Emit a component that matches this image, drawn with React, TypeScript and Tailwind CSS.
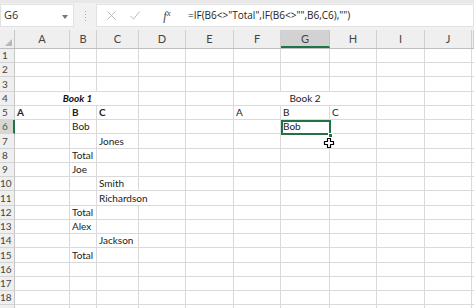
const cols = ["A", "B", "C", "D", "E", "F", "G", "H", "I", "J", ""];
const widths = [55, 27, 42, 47, 48, 47, 49, 47, 48, 47, 2];

type Cell = { text: string; bold?: boolean; noRight?: boolean };

const data: Record<number, Record<number, Cell>> = {
  5: {
    0: { text: "A", bold: true },
    1: { text: "B", bold: true },
    2: { text: "C", bold: true },
    5: { text: "A" },
    6: { text: "B" },
    7: { text: "C" },
  },
  6: { 1: { text: "Bob" }, 6: { text: "Bob" } },
  7: { 2: { text: "Jones" } },
  8: { 1: { text: "Total" } },
  9: { 1: { text: "Joe" } },
  10: { 2: { text: "Smith" } },
  11: { 2: { text: "Richardson", noRight: true } },
  12: { 1: { text: "Total" } },
  13: { 1: { text: "Alex" } },
  14: { 2: { text: "Jackson" } },
  15: { 1: { text: "Total" } },
};

function RowHeader({ n }: { n: number }) {
  const active = n === 6;
  return (
    <div
      className={`flex h-full w-[15px] shrink-0 items-end overflow-visible whitespace-nowrap text-[10px] leading-[13px] ${
        n < 10 ? "pl-[2px]" : "pl-0"
      } ${
        active
          ? "border-r-2 border-r-[#217346] bg-[#d6d6d6] text-[#217346]"
          : "border-r border-r-[#c6c6c6] bg-[#efefef] text-[#444]"
      } border-b border-b-[#d4d4d4]`}
    >
      {n}
    </div>
  );
}

function Row({ n }: { n: number }) {
  if (n === 4) {
    return (
      <div className="flex h-[14.25px]">
        <RowHeader n={n} />
        <div className="flex w-[124px] shrink-0 items-end justify-center border-b border-r border-[#dadada] pl-[2px] text-[10px] font-bold italic leading-[13px] text-[#111]">
          Book 1
        </div>
        <div className="w-[47px] shrink-0 border-b border-r border-[#dadada]" />
        <div className="w-[48px] shrink-0 border-b border-r border-[#dadada]" />
        <div className="flex w-[143px] shrink-0 items-end justify-center border-b border-r border-[#dadada] text-[10px] leading-[13px] text-[#222]">
          Book 2
        </div>
        <div className="w-[48px] shrink-0 border-b border-r border-[#dadada]" />
        <div className="w-[47px] shrink-0 border-b border-r border-[#dadada]" />
        <div className="w-[2px] shrink-0 border-b border-[#dadada]" />
      </div>
    );
  }
  const row = data[n] || {};
  return (
    <div className="flex h-[14.25px]">
      <RowHeader n={n} />
      {widths.map((w, i) => {
        const c = row[i];
        return (
          <div
            key={i}
            style={{ width: w }}
            className={`relative flex shrink-0 items-end whitespace-nowrap border-b border-[#dadada] pl-[2px] text-[10px] leading-[13px] text-[#222] ${
              c?.noRight ? "" : "border-r"
            } ${c?.bold ? "font-bold text-[#111]" : ""}`}
          >
            {c ? <span className="relative z-10">{c.text}</span> : null}
          </div>
        );
      })}
    </div>
  );
}

function FillCursor() {
  return (
    <svg width="12" height="12" viewBox="0 0 12 12" className="absolute left-[323px] top-[137px] z-20">
      <path
        d="M4.5 1.5h3v3h3v3h-3v3h-3v-3h-3v-3h3z"
        fill="white"
        stroke="black"
        strokeWidth="1.2"
        strokeLinejoin="round"
      />
    </svg>
  );
}

export default function App() {
  const rows = Array.from({ length: 19 }, (_, i) => i + 1);
  return (
    <div className="relative h-[308px] w-[474px] overflow-hidden bg-white font-['Lato','Liberation_Sans',sans-serif]">
      <div className="h-[3px] bg-[#e8e8e8]" />
      <div className="flex h-[24px] items-stretch bg-[#f1f1f1] pt-[1px]">
        <div className="flex w-[74px] items-center justify-between border border-[#e2e2e2] bg-white pl-[3px] pr-[5px] font-['Open_Sans',sans-serif] text-[11px] text-[#333]">
          <span>G6</span>
          <svg width="6" height="4" viewBox="0 0 6 4" className="mt-[2px]">
            <path d="M0 0h6L3 4z" fill="#777" />
          </svg>
        </div>
        <div className="flex w-[22px] items-center justify-center">
          <svg width="3" height="10" viewBox="0 0 3 10">
            <rect x="1" y="0" width="1" height="1" fill="#aaa" />
            <rect x="1" y="3" width="1" height="1" fill="#aaa" />
            <rect x="1" y="6" width="1" height="1" fill="#aaa" />
            <rect x="1" y="9" width="1" height="1" fill="#aaa" />
          </svg>
        </div>
        <div className="flex flex-1 items-center border border-[#e2e2e2] bg-white">
          <div className="flex w-[25px] justify-center pl-[3px]">
            <svg width="9" height="9" viewBox="0 0 9 9">
              <path d="M0.5 0.5l8 8M8.5 0.5l-8 8" stroke="#bdbdbd" strokeWidth="1" />
            </svg>
          </div>
          <div className="flex w-[25px] justify-center">
            <svg width="10" height="9" viewBox="0 0 10 9">
              <path d="M0.5 5l3 3.2L9.5 0.5" stroke="#bdbdbd" strokeWidth="1" fill="none" />
            </svg>
          </div>
          <div className="flex w-[40px] justify-center font-['Liberation_Serif',serif] text-[12px] italic text-[#444]">
            f<span className="text-[9px]">x</span>
          </div>
          <span className="ml-[1px] font-['Open_Sans',sans-serif] text-[10px] text-[#222]">
            =IF(B6&lt;&gt;"Total",IF(B6&lt;&gt;"",B6,C6),"")
          </span>
        </div>
      </div>
      <div className="h-[3px] bg-[#f1f1f1]" />
      <div className="flex h-[18.75px] border-b border-[#bdbdbd] bg-[#efefef]">
        <div className="relative w-[15px] shrink-0 border-r border-[#c6c6c6]">
          <svg width="7" height="7" viewBox="0 0 7 7" className="absolute bottom-[2px] right-[2px]">
            <path d="M7 0v7H0z" fill="#b9b9b9" />
          </svg>
        </div>
        {cols.map((c, i) => (
          <div
            key={i}
            style={{ width: widths[i] }}
            className={`flex shrink-0 items-center justify-center text-[11px] text-[#444] ${
              c === "G"
                ? "border-b-2 border-r border-b-[#217346] border-r-[#c6c6c6] bg-[#d2d2d2] pt-[2px]"
                : "border-r border-[#d0d0d0]"
            }`}
          >
            {c}
          </div>
        ))}
      </div>
      <div className="relative">
        {rows.map((n) => (
          <Row key={n} n={n} />
        ))}
        <div className="pointer-events-none absolute left-[281px] top-[70.75px] z-10 h-[15.25px] w-[50px] border-2 border-[#217346]" />
        <div className="absolute left-[328px] top-[84px] z-10 h-[5px] w-[5px] border border-white bg-[#217346]" />
      </div>
      <FillCursor />
    </div>
  );
}
